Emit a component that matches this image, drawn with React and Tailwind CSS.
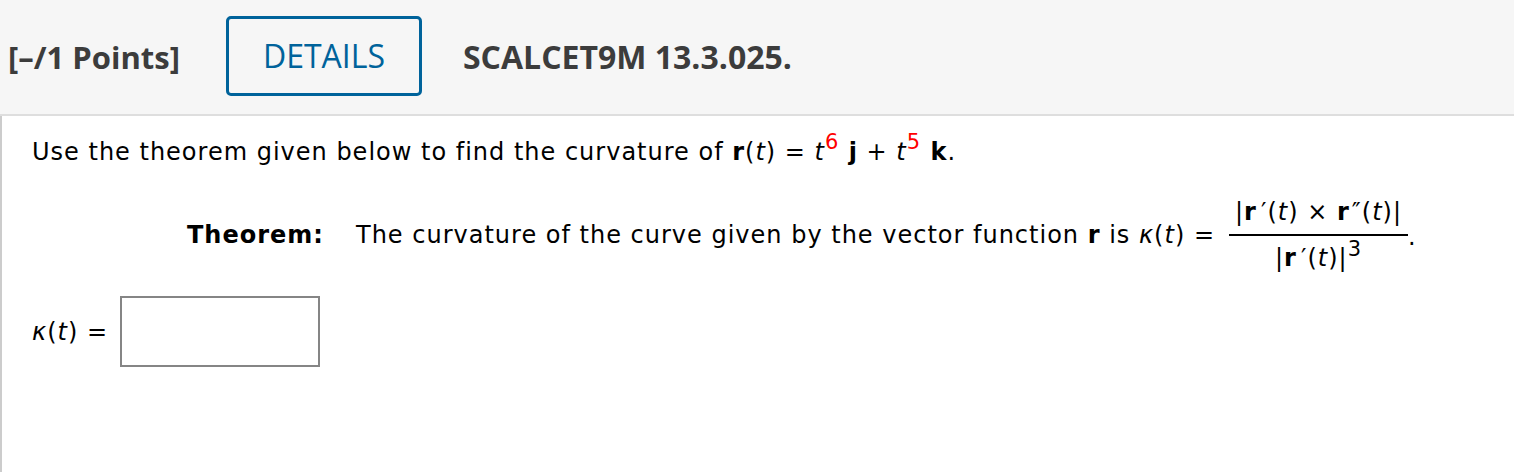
import React from "react";

function T() {
  return <span className="italic">t</span>;
}

export default function App() {
  return (
    <div className="w-[1514px] h-[472px] bg-white overflow-hidden">
      <div className="h-[116px] bg-[#f6f6f6] border-b-2 border-[#dedede] flex items-center pl-[8px] font-['Open_Sans',sans-serif]">
        <span className="text-[31px] font-bold text-[#3c3c3c] leading-[40px]">[–/1 Points]</span>
        <div className="ml-[46px] w-[196px] h-[80px] border-[3px] border-[#00639b] rounded-[5px] flex items-center justify-center text-[32px] font-medium text-[#00639b] mt-[-3px]">
          DETAILS
        </div>
        <span className="ml-[41px] text-[32px] font-bold text-[#3c3c3c] leading-[40px]">SCALCET9M 13.3.025.</span>
      </div>
      <div className="h-[356px] border-l-2 border-[#cccccc] pl-[30px] pt-[22px] text-black font-['DejaVu_Sans',sans-serif] text-[24px] leading-[28px] tracking-[1px]">
        <div className="h-[28px] flex items-end whitespace-pre">
          <span>Use the theorem given below to find the curvature of </span>
          <span className="font-bold">r</span>
          <span>(<T />) = <T /></span>
          <span className="text-[#ff0000] relative -top-[10px] text-[21px]">6</span>
          <span className="font-bold"> j</span>
          <span> + <T /></span>
          <span className="text-[#ff0000] relative -top-[10px] text-[21px]">5</span>
          <span className="font-bold"> k</span>
          <span>.</span>
        </div>
        <div className="flex items-center ml-[155px] mt-[30px] whitespace-pre">
          <span className="font-bold w-[169px]">Theorem:</span>
          <span>The curvature of the curve given by the vector function <b>r</b> is <span className="italic">κ</span>(<T />) =</span>
          <div className="ml-[14px] flex flex-col items-center mt-[2px]">
            <div className="px-[6px] pb-[8px]">|<b>r</b><span className="ml-[4px]">′</span>(<T />) × <b>r</b><span className="ml-[2px]">″</span>(<T />)|</div>
            <div className="h-[2px] w-full bg-black"></div>
            <div className="pt-[8px]">|<b>r</b><span className="ml-[4px]">′</span>(<T />)|<span className="relative -top-[10px] text-[21px]">3</span></div>
          </div>
          <span className="mt-[4px]">.</span>
        </div>
        <div className="flex items-center mt-[23px] whitespace-pre">
          <span><span className="italic">κ</span>(<T />) =</span>
          <div className="ml-[12px] w-[200px] h-[71px] border-2 border-[#858585] bg-white"></div>
        </div>
      </div>
    </div>
  );
}
